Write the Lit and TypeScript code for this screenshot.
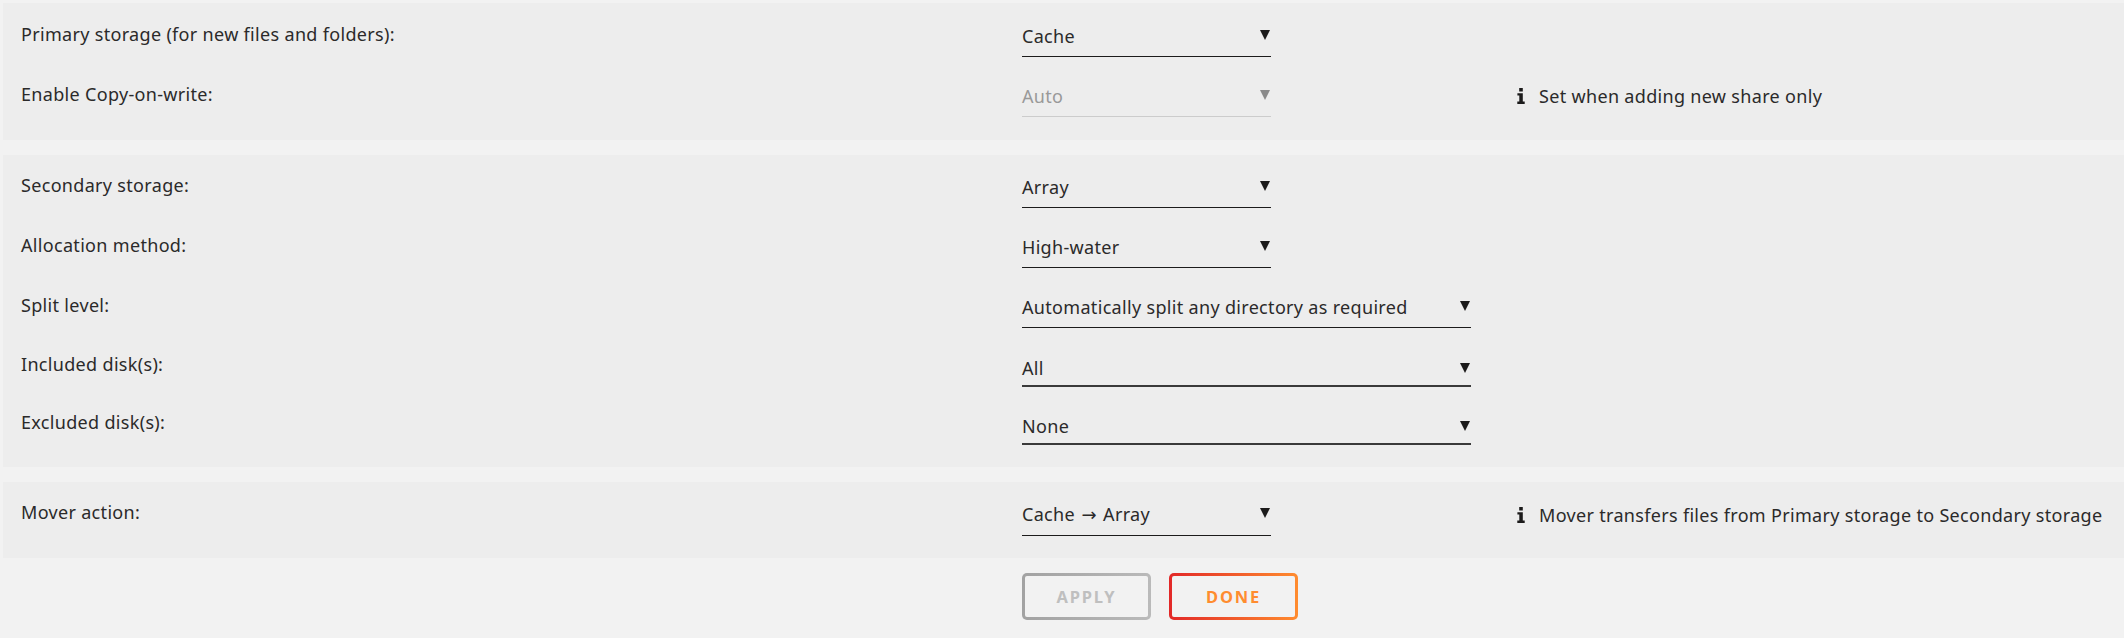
import { LitElement, html, css, TemplateResult } from "lit";
import { customElement } from "lit/decorators.js";

const info = html`<svg class="ic" viewBox="0 0 8 16"><path d="M2.2 0h3.6v3.6H2.2zM.4 5.2h5.4v8.3h1.9V16H.3v-2.5h2V7.6H.4z"/></svg>`;

type Row = { label: string; value: string | TemplateResult; h?: string; wide?: boolean; low?: boolean; disabled?: boolean; note?: string };
const groups: { cls: string; rows: Row[] }[] = [
  {
    cls: "p1",
    rows: [
      { label: "Primary storage (for new files and folders):", value: "Cache" },
      { label: "Enable Copy-on-write:", value: "Auto", disabled: true, note: "Set when adding new share only" },
    ],
  },
  {
    cls: "p2",
    rows: [
      { label: "Secondary storage:", value: "Array" },
      { label: "Allocation method:", value: "High-water" },
      { label: "Split level:", value: "Automatically split any directory as required", wide: true, h: "h59" },
      { label: "Included disk(s):", value: "All", wide: true, low: true, h: "h58" },
      { label: "Excluded disk(s):", value: "None", wide: true, low: true },
    ],
  },
  {
    cls: "p3",
    rows: [
      {
        label: "Mover action:",
        value: html`Cache <span class="arr">→</span> Array`,
        note: "Mover transfers files from Primary storage to Secondary storage",
      },
    ],
  },
];

@customElement("app-root")
export class AppRoot extends LitElement {
  static styles = css`
    :host {
      display: block;
      width: 2124px;
      height: 638px;
      box-sizing: border-box;
      padding: 3px 0 0 3px;
      background: #f2f2f2;
      color: #2b2a2a;
      font-family: "Noto Sans", sans-serif;
      font-size: 18px;
      letter-spacing: 0.32px;
      overflow: hidden;
    }
    .panel {
      background: #ededed;
      margin-bottom: 15px;
      box-sizing: border-box;
    }
    .p1 { height: 137px; padding-top: 14px; }
    .p2 { height: 312px; padding-top: 13px; }
    .p3 { height: 76px; padding-top: 14px; }
    .row {
      display: grid;
      grid-template-columns: 1019px 495px 1fr;
      height: 60px;
    }
    .row.h58 { height: 58px; }
    .row.h59 { height: 59px; }
    .lab { padding-left: 18px; line-height: 35px; white-space: nowrap; }
    .p3 .lab { line-height: 33px; }
    .sel {
      width: 249px;
      height: 40px;
      box-sizing: border-box;
      border-bottom: 1.5px solid #1c1b1b;
      display: flex;
      justify-content: space-between;
      align-items: center;
      white-space: nowrap;
      padding-bottom: 1px;
    }
    .p3 .sel { padding-bottom: 3px; }
    .sel.wide { width: 449px; }
    .sel.low { padding-top: 4px; border-bottom: 2px solid #3a3a3a; }
    .sel.off { color: #999; border-color: #ccc; }
    .arr { font-family: "DejaVu Sans", sans-serif; letter-spacing: 0; margin: 0 1.5px; }
    .tri {
      width: 0;
      height: 0;
      border-left: 5px solid transparent;
      border-right: 5px solid transparent;
      border-top: 10px solid #1c1b1b;
      margin: 0 1px 2px 0;
    }
    .sel.low .tri { margin-bottom: 0; }
    .sel.off .tri { border-top-color: #8a8a8a; }
    .note { display: flex; align-items: center; gap: 14px; height: 38px; white-space: nowrap; }
    .ic { width: 8px; height: 16px; fill: #1c1b1b; flex: none; }
    .btns {
      display: flex;
      gap: 18px;
      padding-left: 1019px;
    }
    .btn {
      width: 129px;
      height: 47px;
      box-sizing: border-box;
      border: 3px solid transparent;
      border-radius: 5px;
      display: flex;
      align-items: center;
      justify-content: center;
      font-weight: 700;
      font-size: 16.5px;
      letter-spacing: 1.8px;
    }
    .apply {
      color: #bfbfbf;
      background: linear-gradient(#f2f2f2, #f2f2f2) padding-box, linear-gradient(90deg, #a2a2a2, #bababa) border-box;
    }
    .done {
      color: #ff8c2f;
      background: linear-gradient(#f2f2f2, #f2f2f2) padding-box, linear-gradient(90deg, #e22828, #ff8c2f) border-box;
    }
  `;

  render() {
    return html`
      ${groups.map(
        (g) => html`<div class="panel ${g.cls}">
          ${g.rows.map(
            (r) => html`<div class="row ${r.h ?? ""}">
              <div class="lab">${r.label}</div>
              <div>
                <div class="sel ${r.wide ? "wide" : ""} ${r.low ? "low" : ""} ${r.disabled ? "off" : ""}">
                  <span>${r.value}</span><span class="tri"></span>
                </div>
              </div>
              ${r.note ? html`<div class="note">${info}<span>${r.note}</span></div>` : html`<div></div>`}
            </div>`
          )}
        </div>`
      )}
      <div class="btns">
        <div class="btn apply">APPLY</div>
        <div class="btn done">DONE</div>
      </div>
    `;
  }
}
